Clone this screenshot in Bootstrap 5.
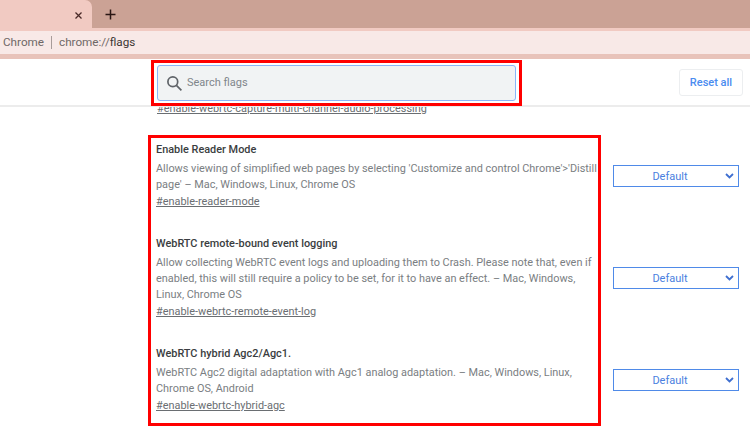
<!DOCTYPE html>
<html lang="en">
<head>
    <meta charset="UTF-8">
    <meta name="viewport" content="width=device-width, initial-scale=1.0">
    <title>chrome://flags</title>
    <link href="https://cdn.jsdelivr.net/npm/bootstrap@5.3.0/dist/css/bootstrap.min.css" rel="stylesheet">
    <style>
        html, body { height: 429px; overflow: hidden; }
        body { font-family: Roboto, "Liberation Sans", sans-serif; background: #fff; }

        .tab-strip { height: 28px; background: #cba295; }
        .active-tab { width: 92px; height: 31px; background: #f1cac2; border-top-right-radius: 7px; padding-right: 9px; position: relative; z-index: 1; }
        .new-tab { width: 36px; }
        .addr-top { height: 3px; background: #f1cac2; }
        .addr-bar { height: 23px; background: #f8e9e7; font-size: 11.7px; color: #6f6866; padding-left: 3px; }
        .addr-sep { width: 1px; height: 13px; background: #a89c9a; margin: 0 7px; }
        .addr-host { color: #3c3634; }
        .addr-bottom { height: 5px; background: #e8c3ba; }

        .flags-head { height: 48px; border-bottom: 2px solid #ececec; background: #fff; position: relative; z-index: 1; }
        .mark-search { position: absolute; left: 151px; top: 1px; width: 371px; height: 46px; border: 3px solid #f00; padding: 2px 3px; }
        .search-field { height: 36px; width: 100%; background: #f1f3f4; border: 1px solid #8ab4f8; border-radius: 3px; padding-left: 8px; color: #80868b; font-size: 11px; gap: 4px; }
        .reset-btn { position: absolute; left: 679px; top: 10px; width: 64px; height: 27px; border: 1px solid #eceef0; border-radius: 3px; background: #fff; color: #4a8cf0; font-size: 11px; font-weight: 500; padding: 1px 0 0; }

        .flags-body { height: 322px; overflow: hidden; position: relative; }
        .cut-link { margin: -6px 0 0 157px; height: 15px; line-height: 15px; }
        .flag-link { font-size: 10.9px; color: #6a6e72; text-decoration: underline; display: block; }
        .mark-list { position: absolute; left: 148px; top: 28px; width: 453px; height: 291px; border: 3px solid #f00; pointer-events: none; }
        .flag-list { margin: 13px 0 0 156px; }
        .flag-row { width: 583px; }
        .flag-row1 { height: 94px; }
        .flag-row2 { height: 110px; }
        .flag-text { width: 445px; font-size: 10.9px; line-height: 16px; color: #7a7e82; }
        .flag-name { font-size: 10.9px; font-weight: 500; color: #3a3d40; line-height: 16px; margin-bottom: 3px; }
        .flag-text .flag-link { margin-top: 1px; line-height: 16px; }
        .flag-select { position: relative; width: 126px; height: 22px; margin-left: 12px; margin-top: -1px; border: 1px solid #4f8ae8; color: #4a7fe0; font-size: 11px; padding: 3px 12px 0 0; }
        .select-caret { position: absolute; right: 4px; top: 7px; }
    </style>
</head>
<body>
    <div class="tab-strip d-flex">
        <div class="active-tab d-flex align-items-center justify-content-end">
            <svg width="9" height="9" viewBox="0 0 9 9"><path d="M1.5 1.5l6 6M7.5 1.5l-6 6" stroke="#4a2a28" stroke-width="1.3"/></svg>
        </div>
        <div class="new-tab d-flex align-items-center justify-content-center">
            <svg width="11" height="11" viewBox="0 0 11 11"><path d="M5.5 .5v10M.5 5.5h10" stroke="#2a1614" stroke-width="1.5"/></svg>
        </div>
    </div>
    <div class="addr-top"></div>
    <div class="addr-bar d-flex align-items-center">
        <span>Chrome</span><span class="addr-sep"></span><span>chrome://<span class="addr-host">flags</span></span>
    </div>
    <div class="addr-bottom"></div>

    <div class="flags-head">
        <div class="mark-search">
            <div class="search-field d-flex align-items-center">
                <svg width="17" height="17" viewBox="0 0 17 17" fill="none" stroke="#5f6368" stroke-width="1.7"><circle cx="6.8" cy="6.8" r="4.9"/><path d="M10.4 10.4l5 5"/></svg>
                <span>Search flags</span>
            </div>
        </div>
        <button class="reset-btn" type="button">Reset all</button>
    </div>

    <div class="flags-body">
        <div class="cut-link"><a class="flag-link" href="#">#enable-webrtc-capture-multi-channel-audio-processing</a></div>
        <div class="mark-list"></div>
        <div class="flag-list">
            <div class="flag-row flag-row1 d-flex align-items-center">
                <div class="flag-text">
                    <div class="flag-name">Enable Reader Mode</div>
                    <div>Allows viewing of simplified web pages by selecting 'Customize and control Chrome'&gt;'Distill page' – Mac, Windows, Linux, Chrome OS</div>
                    <a class="flag-link" href="#">#enable-reader-mode</a>
                </div>
                <div class="flag-select d-flex align-items-center justify-content-center">Default
                    <svg class="select-caret" width="9" height="6" viewBox="0 0 9 6" fill="none" stroke="#3f6fd0" stroke-width="1.8"><path d="M1 1l3.5 3.5L8 1"/></svg>
                </div>
            </div>
            <div class="flag-row flag-row2 d-flex align-items-center">
                <div class="flag-text">
                    <div class="flag-name">WebRTC remote-bound event logging</div>
                    <div>Allow collecting WebRTC event logs and uploading them to Crash. Please note that, even if enabled, this will still require a policy to be set, for it to have an effect. – Mac, Windows, Linux, Chrome OS</div>
                    <a class="flag-link" href="#">#enable-webrtc-remote-event-log</a>
                </div>
                <div class="flag-select d-flex align-items-center justify-content-center">Default
                    <svg class="select-caret" width="9" height="6" viewBox="0 0 9 6" fill="none" stroke="#3f6fd0" stroke-width="1.8"><path d="M1 1l3.5 3.5L8 1"/></svg>
                </div>
            </div>
            <div class="flag-row flag-row1 d-flex align-items-center">
                <div class="flag-text">
                    <div class="flag-name">WebRTC hybrid Agc2/Agc1.</div>
                    <div>WebRTC Agc2 digital adaptation with Agc1 analog adaptation. – Mac, Windows, Linux, Chrome OS, Android</div>
                    <a class="flag-link" href="#">#enable-webrtc-hybrid-agc</a>
                </div>
                <div class="flag-select d-flex align-items-center justify-content-center">Default
                    <svg class="select-caret" width="9" height="6" viewBox="0 0 9 6" fill="none" stroke="#3f6fd0" stroke-width="1.8"><path d="M1 1l3.5 3.5L8 1"/></svg>
                </div>
            </div>
        </div>
    </div>

    <script src="https://cdn.jsdelivr.net/npm/bootstrap@5.3.0/dist/js/bootstrap.bundle.min.js"></script>
</body>
</html>
